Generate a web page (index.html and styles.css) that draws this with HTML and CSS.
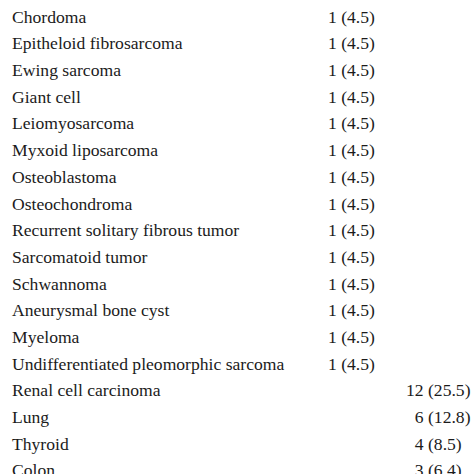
FILE: index.html
```html
<!DOCTYPE html>
<html>
<head>
<meta charset="utf-8">
<link rel="stylesheet" href="styles.css">
</head>
<body>
<div class="table">
  <div class="name">Chordoma</div><div class="c2">1 (4.5)</div><div class="c3"></div>
  <div class="name">Epitheloid fibrosarcoma</div><div class="c2">1 (4.5)</div><div class="c3"></div>
  <div class="name">Ewing sarcoma</div><div class="c2">1 (4.5)</div><div class="c3"></div>
  <div class="name">Giant cell</div><div class="c2">1 (4.5)</div><div class="c3"></div>
  <div class="name">Leiomyosarcoma</div><div class="c2">1 (4.5)</div><div class="c3"></div>
  <div class="name">Myxoid liposarcoma</div><div class="c2">1 (4.5)</div><div class="c3"></div>
  <div class="name">Osteoblastoma</div><div class="c2">1 (4.5)</div><div class="c3"></div>
  <div class="name">Osteochondroma</div><div class="c2">1 (4.5)</div><div class="c3"></div>
  <div class="name">Recurrent solitary fibrous tumor</div><div class="c2">1 (4.5)</div><div class="c3"></div>
  <div class="name">Sarcomatoid tumor</div><div class="c2">1 (4.5)</div><div class="c3"></div>
  <div class="name">Schwannoma</div><div class="c2">1 (4.5)</div><div class="c3"></div>
  <div class="name">Aneurysmal bone cyst</div><div class="c2">1 (4.5)</div><div class="c3"></div>
  <div class="name">Myeloma</div><div class="c2">1 (4.5)</div><div class="c3"></div>
  <div class="name">Undifferentiated pleomorphic sarcoma</div><div class="c2">1 (4.5)</div><div class="c3"></div>
  <div class="name">Renal cell carcinoma</div><div class="c2"></div><div class="c3">12 (25.5)</div>
  <div class="name">Lung</div><div class="c2"></div><div class="c3"><span class="pad"></span>6 (12.8)</div>
  <div class="name">Thyroid</div><div class="c2"></div><div class="c3"><span class="pad"></span>4 (8.5)</div>
  <div class="name">Colon</div><div class="c2"></div><div class="c3"><span class="pad"></span>3 (6.4)</div>
</div>
</body>
</html>
```

FILE: styles.css
```css
html, body {
  margin: 0;
  padding: 0;
  background: #ffffff;
  overflow: hidden;
}
body {
  font-family: "Liberation Serif", "Times New Roman", serif;
  font-size: 17.6px;
  color: #1b1b1b;
}
.table {
  display: grid;
  grid-template-columns: 316px 78px auto;
  grid-auto-rows: 26.7px;
  line-height: 26.7px;
  padding: 3.7px 0 0 12px;
  white-space: nowrap;
}
.pad {
  display: inline-block;
  width: 0.5em;
}
```
